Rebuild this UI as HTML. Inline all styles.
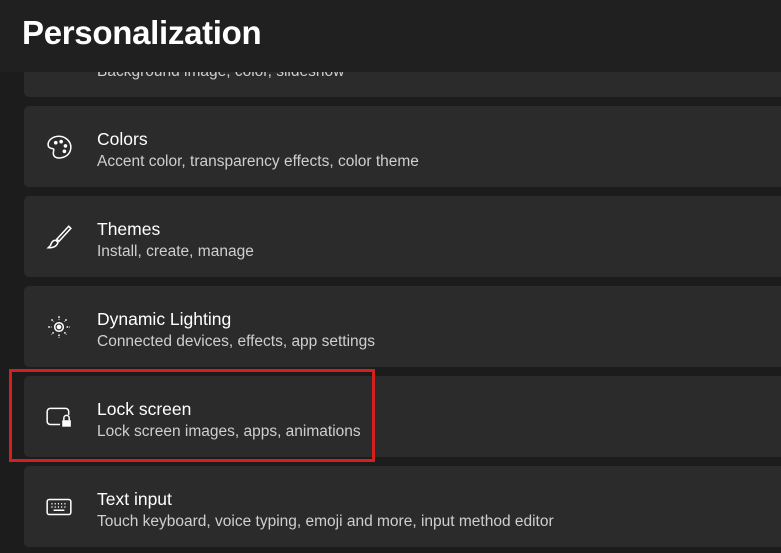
<!DOCTYPE html>
<html><head><style>
body{margin:0;width:781px;height:553px;background:#1c1c1c;overflow:hidden;position:relative;font-family:"Liberation Sans",sans-serif;color:#fff}
.hdr{position:absolute;left:0;top:0;width:781px;height:72px;background:#202020;z-index:2}
.hdr h1{position:absolute;left:22px;top:14px;margin:0;font-size:33px;font-weight:bold;letter-spacing:-0.3px}
.card{position:absolute;left:24px;width:770px;height:81px;background:#2b2b2b;border-radius:5px}
.t{position:absolute;left:73px;top:23px;font-size:17.5px;color:#fff}
.s{position:absolute;left:73px;top:47px;font-size:15.5px;color:#cfcfcf}
.ic{position:absolute;left:21px;top:27px}
.red{position:absolute;left:9px;top:369px;width:360px;height:87px;border:3px solid #d21f1f;z-index:3}
</style></head><body>
<div class="card" style="top:16px"><div class="s" style="top:47px">Background image, color, slideshow</div></div>
<div class="hdr"><h1>Personalization</h1></div>
<div class="card" style="top:106px"><svg class="ic" width="28" height="28" viewBox="0 0 26 26" fill="none" stroke="#fff" stroke-width="1.4"><path d="M13 3C7 3 2 7 3 12c1 3 4 2 5 3s-2 4 1 7c3 2 5 1 6 1 6-1 9-5 9-10S19 3 13 3z"/><circle cx="10" cy="9" r="1" fill="#fff"/><circle cx="15" cy="8" r="1" fill="#fff"/><circle cx="19" cy="12" r="1" fill="#fff"/><circle cx="18" cy="17" r="1" fill="#fff"/></svg><div class="t">Colors</div><div class="s">Accent color, transparency effects, color theme</div></div>
<div class="card" style="top:196px"><svg class="ic" width="28" height="28" viewBox="0 0 26 26" fill="none" stroke="#fff" stroke-width="1.4"><path d="M22 3L11 15l2 2L24 5z"/><path d="M10 16c-3 0-4 2-5 5l-2 2c4 0 8-1 9-5z"/></svg><div class="t">Themes</div><div class="s">Install, create, manage</div></div>
<div class="card" style="top:286px"><svg class="ic" width="28" height="28" viewBox="0 0 26 26" fill="none" stroke="#fff" stroke-width="1.4"><circle cx="13" cy="13" r="4"/><circle cx="13" cy="13" r="1.5" fill="#fff"/><path d="M13 3v3M13 20v3M3 13h3M20 13h3M6 6l2 2M18 18l2 2M20 6l-2 2M8 18l-2 2" stroke-dasharray="1.5 1"/></svg><div class="t">Dynamic Lighting</div><div class="s">Connected devices, effects, app settings</div></div>
<div class="card" style="top:376px"><svg class="ic" width="28" height="28" viewBox="0 0 26 26" fill="none" stroke="#fff" stroke-width="1.4"><path d="M14 20H5a3 3 0 0 1-3-3V8a3 3 0 0 1 3-3h14a3 3 0 0 1 3 3v3"/><rect x="16" y="16" width="8" height="6" fill="#fff" stroke="none"/><path d="M17.5 16v-2a2.5 2.5 0 0 1 5 0v2"/></svg><div class="t">Lock screen</div><div class="s">Lock screen images, apps, animations</div></div>
<div class="card" style="top:466px"><svg class="ic" width="28" height="28" viewBox="0 0 26 26" fill="none" stroke="#fff" stroke-width="1.4"><rect x="2" y="6" width="22" height="14" rx="2"/><path d="M6 10h1M9 10h1M12 10h1M15 10h1M18 10h1M6 13h1M9 13h1M12 13h1M15 13h1M18 13h1M8 16h10"/></svg><div class="t">Text input</div><div class="s">Touch keyboard, voice typing, emoji and more, input method editor</div></div>
<div class="red"></div>
</body></html>
